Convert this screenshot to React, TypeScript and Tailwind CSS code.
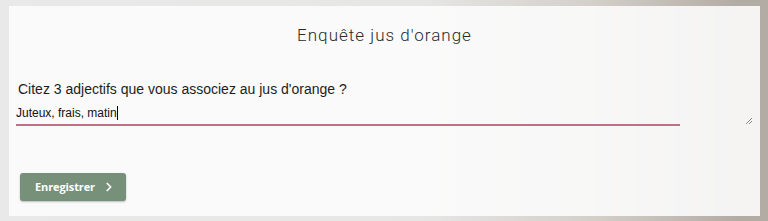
import { ChevronRight } from 'lucide-react';

export default function App() {
	return (
		<div className="w-[768px] h-[221px] overflow-hidden bg-[linear-gradient(90deg,#e9e9e9_0%,#e6e6e5_55%,#d3cec8_78%,#b3aca5_96%)] pt-[6px] pl-[9px]">
			<div className="relative w-[751px] h-[210px] bg-[#fcfcfc]/90 flex flex-col">
				<h1 className="mt-[17px] text-center text-[17px] leading-6 font-light tracking-[0.06em] text-[#2b2b2b] font-['Roboto',sans-serif]">
					Enquête jus d&apos;orange
				</h1>
				<label className="mt-[32px] ml-[9px] text-[14px] leading-5 text-[#1d1d1d] font-['Liberation_Sans',Arial,sans-serif]">
					Citez 3 adjectifs que vous associez au jus d&apos;orange ?
				</label>
				<div className="relative mt-[3px] ml-[7px] mr-[6px] h-[22px] flex items-center">
					<span className="text-[12px] text-[#111] font-['Liberation_Sans',Arial,sans-serif]">Juteux, frais, matin</span>
					<span className="w-px h-[14px] bg-black" />
					<svg className="absolute right-[1px] bottom-[-1px]" width="8" height="8" viewBox="0 0 8 8">
						<path d="M7 1 L1 7 M7 4 L4 7" stroke="#8a8a8a" strokeWidth="1" />
					</svg>
				</div>
				<div className="ml-[7px] w-[664px] h-[2px] bg-[#c26f85]" />
				<div className="mt-[47px] ml-[11px]">
					<button className="flex items-center gap-[7px] h-[28px] w-[106px] pl-[15px] rounded-[3px] bg-[#76907a] shadow-[0_1px_2px_rgba(0,0,0,0.25)] text-white text-[11px] tracking-[-0.01em] font-bold font-['Open_Sans',sans-serif]">
						Enregistrer
						<ChevronRight size={14} strokeWidth={3} />
					</button>
				</div>
			</div>
		</div>
	);
}
